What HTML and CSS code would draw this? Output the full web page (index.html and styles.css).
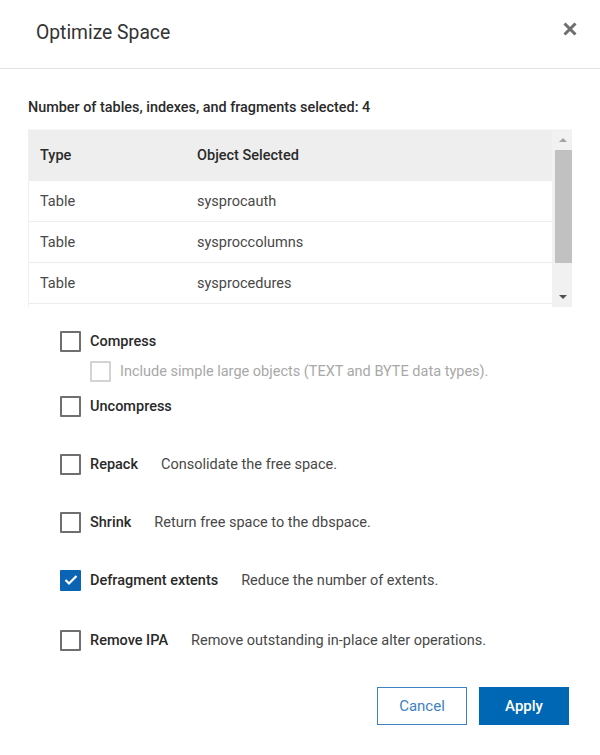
FILE: index.html
```html
<!DOCTYPE html>
<html>
<head>
<meta charset="utf-8">
<link rel="stylesheet" href="styles.css">
</head>
<body>
<div class="dialog">
  <div class="header">
    <h1 class="title">Optimize Space</h1>
    <button class="close" aria-label="Close">
      <svg width="16" height="16" viewBox="0 0 16 16"><path d="M2.5 2.5 L13.5 13.5 M13.5 2.5 L2.5 13.5" stroke="#6e6e6e" stroke-width="3" stroke-linecap="butt"/></svg>
    </button>
  </div>
  <div class="body">
    <p class="count">Number of tables, indexes, and fragments selected: 4</p>
    <div class="grid-wrap">
      <div class="grid">
        <div class="row head"><div class="c1">Type</div><div class="c2">Object Selected</div></div>
        <div class="row"><div class="c1">Table</div><div class="c2">sysprocauth</div></div>
        <div class="row"><div class="c1">Table</div><div class="c2">sysproccolumns</div></div>
        <div class="row"><div class="c1">Table</div><div class="c2">sysprocedures</div></div>
      </div>
      <div class="scrollbar">
        <div class="arrow up"></div>
        <div class="thumb"></div>
        <div class="arrow down"></div>
      </div>
    </div>
    <div class="options">
      <div class="opt first">
        <span class="box"></span><span class="label">Compress</span>
      </div>
      <div class="opt sub">
        <span class="box disabled"></span><span class="desc disabled-text">Include simple large objects (TEXT and BYTE data types).</span>
      </div>
      <div class="opt tight">
        <span class="box"></span><span class="label">Uncompress</span>
      </div>
      <div class="opt">
        <span class="box"></span><span class="label">Repack</span><span class="desc">Consolidate the free space.</span>
      </div>
      <div class="opt">
        <span class="box"></span><span class="label">Shrink</span><span class="desc">Return free space to the dbspace.</span>
      </div>
      <div class="opt">
        <span class="box checked"><svg width="14" height="12" viewBox="0 0 14 12"><path d="M1.5 6 L5 9.5 L12.5 2" fill="none" stroke="#fff" stroke-width="2.2"/></svg></span><span class="label">Defragment extents</span><span class="desc">Reduce the number of extents.</span>
      </div>
      <div class="opt last">
        <span class="box"></span><span class="label">Remove IPA</span><span class="desc">Remove outstanding in-place alter operations.</span>
      </div>
    </div>
  </div>
  <div class="footer">
    <button class="btn secondary">Cancel</button>
    <button class="btn primary">Apply</button>
  </div>
</div>
</body>
</html>
```
FILE: styles.css
```css
* { box-sizing: border-box; }
html, body { margin: 0; padding: 0; background: #fff; }
body {
  font-family: Roboto, "Liberation Sans", Arial, sans-serif;
  color: #333;
  width: 600px;
  height: 755px;
}
.dialog { width: 600px; }
.header {
  height: 69px;
  border-bottom: 1px solid #e3e3e3;
  display: flex;
  align-items: flex-start;
  justify-content: space-between;
  padding: 0 22px 0 36px;
}
.title {
  margin: 21px 0 0;
  font-size: 19.3px;
  font-weight: 400;
  line-height: 24px;
  color: #333;
}
.close {
  margin-top: 21px;
  border: 0;
  background: none;
  padding: 0;
  width: 16px;
  height: 16px;
  display: flex;
}
.body { padding: 0 28px 0 28px; }
.count {
  margin: 30px 0 13px;
  font-size: 14.4px;
  font-weight: 500;
  line-height: 17px;
  color: #2a2a2a;
}
.grid-wrap {
  display: flex;
  height: 178px;
  overflow: hidden;
  border-left: 1px solid #f0f0f0;
  border-top: 1px solid #f6f6f6;
}
.grid { flex: 1; }
.row {
  display: flex;
  height: 41px;
  align-items: center;
  border-bottom: 1px solid #ececec;
  font-size: 14.5px;
  color: #484848;
}
.row.head {
  height: 51px;
  background: #eeeeee;
  border-bottom: 0;
  font-weight: 500;
  color: #2a2a2a;
}
.c1 { width: 168px; padding-left: 11px; }
.c2 { flex: 1; }
.scrollbar {
  width: 22px;
  margin-right: -2px;
  background: #f1f1f1;
  display: flex;
  flex-direction: column;
  align-items: center;
}
.arrow { width: 0; height: 0; border-left: 4px solid transparent; border-right: 4px solid transparent; }
.arrow.up { border-bottom: 4px solid #a3a3a3; margin: 8px 0 8px; }
.arrow.down { border-top: 4px solid #505050; margin: auto 0 8px; }
.thumb { width: 17px; height: 113px; background: #c1c1c1; }
.options { padding-left: 32px; padding-top: 24px; }
.opt {
  display: flex;
  align-items: center;
  height: 20px;
  margin-top: 38px;
  font-size: 14.5px;
}
.opt.first { margin-top: 0; }
.opt.sub { margin-top: 10px; padding-left: 30px; }
.opt.tight { margin-top: 15px; }
.opt.last { margin-top: 40px; }
.box {
  width: 21px;
  height: 21px;
  border: 2px solid #6f6f6f;
  border-radius: 1px;
  flex: none;
  margin-right: 9px;
  display: flex;
  align-items: center;
  justify-content: center;
}
.box.disabled { border-color: #d3d3d3; }
.box.checked { background: #0b63b3; border-color: #0b63b3; }
.label { font-weight: 500; color: #2a2a2a; margin-right: 23px; }
.desc { color: #484848; }
.disabled-text { color: #a8a8a8; }
.footer {
  display: flex;
  justify-content: flex-end;
  gap: 12px;
  padding: 37px 31px 0 0;
}
.btn {
  width: 90px;
  height: 38px;
  font-family: inherit;
  font-size: 15px;
  font-weight: 500;
  border-radius: 0;
  cursor: pointer;
}
.btn.secondary { background: #fff; border: 1px solid #3c82c4; color: #3c82c4; font-weight: 400; }
.btn.primary { background: #0067b4; border: 1px solid #0067b4; color: #fff; }
```
